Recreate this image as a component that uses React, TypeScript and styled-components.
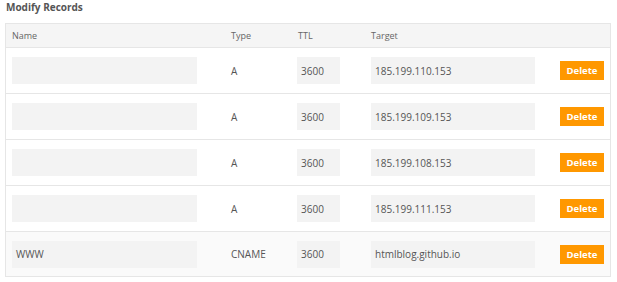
import React from "react";
import styled, { createGlobalStyle } from "styled-components";

const Global = createGlobalStyle`
  html, body { margin: 0; padding: 0; background: #fff; }
  body { font-family: "Open Sans", "Liberation Sans", sans-serif; color: #555; }
`;

const Page = styled.div`
  padding: 0 6px 0 5px;
  width: 606px;
`;

const Title = styled.h3`
  margin: 0;
  padding: 0 0 0 1px;
  height: 23px;
  line-height: 14px;
  font-size: 10px;
  font-weight: 700;
  color: #555;
`;

const Table = styled.div`
  border: 1px solid #e6e6e6;
`;

const cols = "218px 66px 74px 189px 1fr";

const HeadRow = styled.div`
  display: grid;
  grid-template-columns: ${cols};
  height: 23px;
  align-items: center;
  background: #f5f5f5;
  border-bottom: 1px solid #e6e6e6;
  font-size: 9px;
  color: #666;
`;

const HeadCell = styled.div<{ $pl?: number }>`
  padding-left: ${(p) => p.$pl ?? 7}px;
`;

const Row = styled.div<{ $alt?: boolean; $last?: boolean }>`
  display: grid;
  grid-template-columns: ${cols};
  height: ${(p) => (p.$last ? 44 : 45)}px;
  align-items: center;
  background: ${(p) => (p.$alt ? "#fafafa" : "#fff")};
  border-bottom: ${(p) => (p.$last ? "none" : "1px solid #e6e6e6")};
  font-size: 10px;
  color: #555;
`;

const Cell = styled.div<{ $pl?: number }>`
  padding-left: ${(p) => p.$pl ?? 7}px;
  display: flex;
  align-items: center;
`;

const Field = styled.div<{ $w: number }>`
  width: ${(p) => p.$w}px;
  height: 27px;
  background: #f3f3f3;
  box-sizing: border-box;
  padding-left: 4px;
  display: flex;
  align-items: center;
  font-size: 10px;
  color: #555;
`;

const TypeText = styled.span`
  font-size: 10px;
  color: #555;
`;

const DeleteBtn = styled.button`
  width: 44px;
  height: 19px;
  border: none;
  padding: 0;
  background: #ff9800;
  color: #fff;
  font-family: "Open Sans", "Liberation Sans", sans-serif;
  font-size: 9.5px;
  font-weight: 700;
  cursor: pointer;
`;

const records = [
  { name: "", type: "A", ttl: "3600", target: "185.199.110.153" },
  { name: "", type: "A", ttl: "3600", target: "185.199.109.153" },
  { name: "", type: "A", ttl: "3600", target: "185.199.108.153" },
  { name: "", type: "A", ttl: "3600", target: "185.199.111.153" },
  { name: "WWW", type: "CNAME", ttl: "3600", target: "htmlblog.github.io" },
];

export default function App() {
  return (
    <Page>
      <Global />
      <Title>Modify Records</Title>
      <Table>
        <HeadRow>
          <HeadCell $pl={6}>Name</HeadCell>
          <HeadCell>Type</HeadCell>
          <HeadCell $pl={8}>TTL</HeadCell>
          <HeadCell>Target</HeadCell>
          <HeadCell />
        </HeadRow>
        {records.map((r, i) => (
          <Row key={i} $alt={i === records.length - 1} $last={i === records.length - 1}>
            <Cell $pl={6}>
              <Field $w={185}>{r.name}</Field>
            </Cell>
            <Cell>
              <TypeText>{r.type}</TypeText>
            </Cell>
            <Cell>
              <Field $w={43}>{r.ttl}</Field>
            </Cell>
            <Cell>
              <Field $w={164}>{r.target}</Field>
            </Cell>
            <Cell>
              <DeleteBtn>Delete</DeleteBtn>
            </Cell>
          </Row>
        ))}
      </Table>
    </Page>
  );
}
